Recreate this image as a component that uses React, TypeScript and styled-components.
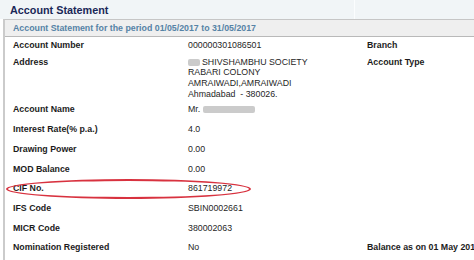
import React from 'react'
import styled, { createGlobalStyle } from 'styled-components'

const Global = createGlobalStyle`
    html, body {
        margin: 0;
        padding: 0;
        background: #ffffff;
    }
    body {
        font-family: "Liberation Sans", Arial, sans-serif;
    }
`

const Page = styled.div`
    width: 474px;
    height: 260px;
    overflow: hidden;
    background: #ffffff;
`

const TitleBar = styled.div`
    display: grid;
    grid-template-columns: 355px 1fr;
    height: 19px;
    background: #f1f5f7;
`

const TitleCell = styled.div`
    display: flex;
    align-items: center;
    padding-left: 10px;
    border-right: 1px solid #fbfdfe;
`

const Title = styled.h1`
    margin: 0;
    font-size: 10.8px;
    font-weight: bold;
    color: #1a2858;
    white-space: nowrap;
`

const Panel = styled.div`
    margin-left: 3px;
    border-left: 2px solid #cbcbcb;
    border-top: 1px solid #c6c6c6;
    height: 240px;
`

const PanelHead = styled.div`
    display: flex;
    align-items: center;
    height: 16px;
    padding-left: 8px;
    background: #efefef;
    border-bottom: 1px solid #b9b9b9;
    font-size: 8.8px;
    font-weight: bold;
    color: #5683a6;
    white-space: nowrap;
`

const Rows = styled.div`
    display: flex;
    flex-direction: column;
`

const Row = styled.div<{ $pad?: string; $ring?: boolean }>`
    position: relative;
    display: grid;
    grid-template-columns: 175px 179px 1fr;
    padding: ${ ({ $pad }) => $pad || '4.4px 0' };
    padding-left: 8px;
    font-size: 8.8px;
    line-height: 10.7px;
    color: #262626;

    &::before {
        content: '';
        display: ${ ({ $ring }) => $ring ? 'block' : 'none' };
        position: absolute;
        left: 1px;
        top: 0;
        width: 241px;
        height: 16px;
        border: 2px solid #d8323f;
        border-radius: 50%;
    }
`

const Label = styled.div`
    font-weight: bold;
    color: #1c1c1c;
    white-space: nowrap;
`

const Value = styled.div`
    white-space: nowrap;
`

const Side = styled.div`
    font-weight: bold;
    color: #1c1c1c;
    white-space: nowrap;
    overflow: hidden;
`

const Blur = styled.span<{ $w: number }>`
    display: inline-block;
    width: ${ ({ $w }) => $w }px;
    height: 7px;
    margin-right: 2px;
    background: #cbcbcb;
    border-radius: 2px;
    vertical-align: -1px;
    filter: blur(0.5px);
`

const rows = [
    { label: 'Interest Rate(% p.a.)', value: '4.0' },
    { label: 'Drawing Power', value: '0.00' },
    { label: 'MOD Balance', value: '0.00' },
    { label: 'CIF No.', value: '861719972', ring: true },
    { label: 'IFS Code', value: 'SBIN0002661' },
    { label: 'MICR Code', value: '380002063' },
]

export default function App() {
    return (
        <Page>
            <Global />
            <TitleBar>
                <TitleCell>
                    <Title>Account Statement</Title>
                </TitleCell>
                <div />
            </TitleBar>
            <Panel>
                <PanelHead>Account Statement for the period 01/05/2017 to 31/05/2017</PanelHead>
                <Rows>
                    <Row $pad='3px 0 4.4px'>
                        <Label>Account Number</Label>
                        <Value>000000301086501</Value>
                        <Side>Branch</Side>
                    </Row>
                    <Row $pad='1.5px 0 0'>
                        <Label>Address</Label>
                        <Value>
                            <Blur $w={ 12 } />SHIVSHAMBHU SOCIETY<br />
                            RABARI COLONY<br />
                            AMRAIWADI,AMRAIWADI<br />
                            Ahmadabad&nbsp; - 380026.
                        </Value>
                        <Side>Account Type</Side>
                    </Row>
                    <Row $pad='5px 0 4.6px'>
                        <Label>Account Name</Label>
                        <Value>Mr. <Blur $w={ 52 } /></Value>
                        <div />
                    </Row>
                    { rows.map(r => (
                        <Row key={ r.label } $ring={ r.ring } $pad='4.5px 0'>
                            <Label>{ r.label }</Label>
                            <Value>{ r.value }</Value>
                            <div />
                        </Row>
                    )) }
                    <Row $pad='4.5px 0'>
                        <Label>Nomination Registered</Label>
                        <Value>No</Value>
                        <Side>Balance as on 01 May 2017</Side>
                    </Row>
                </Rows>
            </Panel>
        </Page>
    )
}
